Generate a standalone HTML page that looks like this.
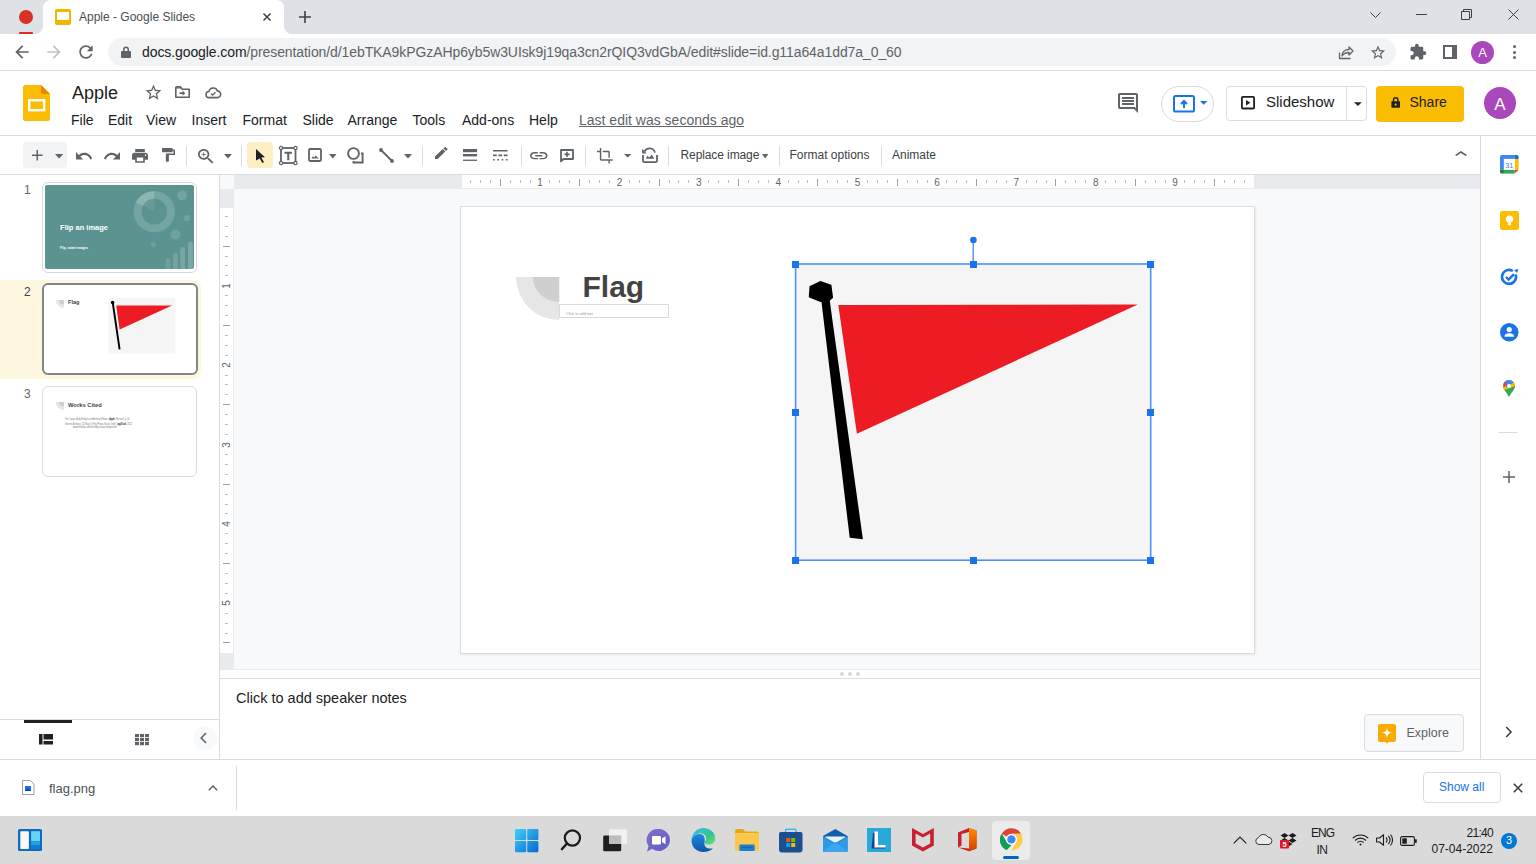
<!DOCTYPE html>
<html><head><meta charset="utf-8">
<style>
*{margin:0;padding:0;box-sizing:border-box}
html,body{width:1536px;height:864px;overflow:hidden;background:#fff;font-family:"Liberation Sans",sans-serif;color:#202124}
.a{position:absolute}
.t{position:absolute;white-space:nowrap;line-height:1}
svg{position:absolute;overflow:visible}
</style></head><body>

<!-- Chrome tab strip -->
<div class="a" style="left:0;top:0;width:1536px;height:34px;background:#dee1e6"></div>
<div class="a" style="left:35px;top:26px;width:8px;height:8px;background:#fff"></div>
<div class="a" style="left:27px;top:18px;width:16px;height:16px;background:#dee1e6;border-radius:0 0 8px 0"></div>
<div class="a" style="left:284px;top:26px;width:8px;height:8px;background:#fff"></div>
<div class="a" style="left:284px;top:18px;width:16px;height:16px;background:#dee1e6;border-radius:0 0 0 8px"></div>
<div class="a" style="left:43px;top:0;width:241px;height:34px;background:#fff;border-radius:8px 8px 0 0"></div>
<div class="a" style="left:19px;top:10px;width:14px;height:14px;border-radius:50%;background:#d93025"></div>
<div class="a" style="left:19px;top:32px;width:14px;height:2px;border-radius:1px 1px 0 0;background:#d93025"></div>
<div class="a" style="left:55px;top:9px;width:16px;height:16px;border-radius:2px;background:#f4b400"></div>
<div class="a" style="left:57px;top:12px;width:12px;height:8px;background:#fff"></div>
<div class="t" style="left:79px;top:11px;font-size:12px;color:#4a4e52">Apple - Google Slides</div>
<svg style="left:263px;top:13px" width="8" height="8" viewBox="0 0 8 8"><path d="M0.5 0.5L7.5 7.5M7.5 0.5L0.5 7.5" stroke="#3c4043" stroke-width="1.5"/></svg>
<svg style="left:299px;top:11px" width="12" height="12" viewBox="0 0 12 12"><path d="M6 0V12M0 6H12" stroke="#3c4043" stroke-width="1.6"/></svg>
<svg style="left:1370px;top:12px" width="11" height="6" viewBox="0 0 11 6"><path d="M0.5 0.5L5.5 5.5L10.5 0.5" stroke="#3c4043" stroke-width="1" fill="none"/></svg>
<div class="a" style="left:1416px;top:14px;width:11px;height:1px;background:#3c4043"></div>
<svg style="left:1461px;top:9px" width="11" height="11" viewBox="0 0 11 11"><path d="M0.5 2.5h8v8h-8z M2.5 2.5V0.5h8v8h-2" stroke="#3c4043" stroke-width="1" fill="none"/></svg>
<svg style="left:1508px;top:9px" width="11" height="11" viewBox="0 0 11 11"><path d="M0.5 0.5L10.5 10.5M10.5 0.5L0.5 10.5" stroke="#3c4043" stroke-width="1" fill="none"/></svg>

<!-- Chrome toolbar -->
<div class="a" style="left:0;top:34px;width:1536px;height:36px;background:#fff"></div>
<div class="a" style="left:0;top:70px;width:1536px;height:1px;background:#dadce0"></div>
<div class="a" style="left:108px;top:38px;width:1288px;height:28px;background:#f1f3f4;border-radius:14px"></div>
<svg style="left:12px;top:42px" width="20" height="20" viewBox="0 0 24 24"><path fill="#5f6368" d="M20 11H7.83l5.59-5.59L12 4l-8 8 8 8 1.41-1.41L7.83 13H20v-2z"/></svg>
<svg style="left:44px;top:42px" width="20" height="20" viewBox="0 0 24 24"><path fill="#bdc1c6" d="M12 4l-1.41 1.41L16.17 11H4v2h12.17l-5.58 5.59L12 20l8-8z"/></svg>
<svg style="left:76px;top:42px" width="20" height="20" viewBox="0 0 24 24"><path fill="#5f6368" d="M17.65 6.35C16.2 4.9 14.21 4 12 4c-4.42 0-7.99 3.58-7.99 8s3.57 8 7.99 8c3.73 0 6.84-2.55 7.73-6h-2.08c-.82 2.33-3.04 4-5.65 4-3.31 0-6-2.69-6-6s2.69-6 6-6c1.66 0 3.14.69 4.22 1.78L13 11h7V4l-2.35 2.35z"/></svg>
<svg style="left:121px;top:46px" width="10" height="12" viewBox="0 0 10 12"><path fill="#5f6368" d="M2 5V3.5a3 3 0 0 1 6 0V5h1a1 1 0 0 1 1 1v5a1 1 0 0 1-1 1H1a1 1 0 0 1-1-1V6a1 1 0 0 1 1-1zM3.5 5h3V3.5a1.5 1.5 0 0 0-3 0z"/></svg>
<div class="t" style="left:142px;top:45px;font-size:14px;letter-spacing:-0.09px;color:#5f6368"><span style="color:#202124">docs.google.com</span>/presentation/d/1ebTKA9kPGzAHp6yb5w3UIsk9j19qa3cn2rQIQ3vdGbA/edit#slide=id.g11a64a1dd7a_0_60</div>
<svg style="left:1338px;top:44px" width="16" height="16" viewBox="0 0 16 16"><path d="M1.5 8.5v6h11M4 12c0-4 3-6.5 7-6.5V3l4 4-4 4V8.5c-3 0-5.5 1-7 3.5z" stroke="#5f6368" stroke-width="1.3" fill="none" stroke-linejoin="round"/></svg>
<svg style="left:1369px;top:44px" width="18" height="17" viewBox="0 0 24 24"><path fill="#5f6368" d="M22 9.24l-7.19-.62L12 2 9.19 8.63 2 9.24l5.46 4.73L5.82 21 12 17.27 18.18 21l-1.63-7.03L22 9.24zM12 15.4l-3.76 2.27 1-4.28-3.32-2.88 4.38-.38L12 6.1l1.71 4.04 4.38.38-3.32 2.88 1 4.28L12 15.4z"/></svg>
<svg style="left:1409px;top:43px" width="18" height="18" viewBox="0 0 24 24"><path fill="#5f6368" d="M20.5 11H19V7c0-1.1-.9-2-2-2h-4V3.5C13 2.12 11.88 1 10.5 1S8 2.12 8 3.5V5H4c-1.1 0-1.99.9-1.99 2v3.8H3.5c1.49 0 2.7 1.21 2.7 2.7s-1.21 2.7-2.7 2.7H2V20c0 1.1.9 2 2 2h3.8v-1.5c0-1.49 1.21-2.7 2.7-2.7 1.49 0 2.7 1.21 2.7 2.7V22H17c1.1 0 2-.9 2-2v-4h1.5c1.38 0 2.5-1.12 2.5-2.5S21.88 11 20.5 11z"/></svg>
<svg style="left:1443px;top:45px" width="14" height="14" viewBox="0 0 14 14"><path d="M1 1h12v12H1z" stroke="#5f6368" stroke-width="2" fill="none"/><path d="M9 1h4v12H9z" fill="#5f6368"/></svg>
<div class="a" style="left:1471px;top:41px;width:23px;height:23px;border-radius:50%;background:#ab47bc"></div>
<div class="t" style="left:1471px;top:46px;width:23px;text-align:center;font-size:13px;color:#fff">A</div>
<div class="a" style="left:1512.5px;top:45px;width:3px;height:3px;border-radius:50%;background:#5f6368"></div>
<div class="a" style="left:1512.5px;top:50.5px;width:3px;height:3px;border-radius:50%;background:#5f6368"></div>
<div class="a" style="left:1512.5px;top:56px;width:3px;height:3px;border-radius:50%;background:#5f6368"></div>

<!-- Slides header -->
<svg style="left:23px;top:85px" width="27" height="36" viewBox="0 0 27 36"><path d="M2.5 0H18L27 9V33.5A2.5 2.5 0 0 1 24.5 36H2.5A2.5 2.5 0 0 1 0 33.5V2.5A2.5 2.5 0 0 1 2.5 0z" fill="#fbbc04"/><path d="M18 0L27 9H20A2 2 0 0 1 18 7z" fill="#ea8600"/><rect x="6.2" y="15.2" width="15" height="10" fill="none" stroke="#fff" stroke-width="2.4"/></svg>
<div class="t" style="left:72px;top:84px;font-size:18px;color:#202124">Apple</div>
<svg style="left:143.5px;top:82.6px" width="19" height="19" viewBox="0 0 24 24"><path fill="#5f6368" d="M22 9.24l-7.19-.62L12 2 9.19 8.63 2 9.24l5.46 4.73L5.82 21 12 17.27 18.18 21l-1.63-7.03L22 9.24zM12 15.4l-3.76 2.27 1-4.28-3.32-2.88 4.38-.38L12 6.1l1.71 4.04 4.38.38-3.32 2.88 1 4.28L12 15.4z"/></svg>
<svg style="left:175px;top:86px" width="15" height="12" viewBox="0 0 15 12"><path d="M0.8 1.8V11.2H14.2V3.2H7L5.6 0.8H1.8A1 1 0 0 0 0.8 1.8z" stroke="#5f6368" stroke-width="1.6" fill="none" stroke-linejoin="round"/><path d="M0.8 1.2H5.6L6.8 2.4H0.8z" fill="#5f6368"/><path d="M4.5 7.2h3.6" stroke="#5f6368" stroke-width="1.8"/><path d="M7.6 4.6L10.2 7.2 7.6 9.8z" fill="#5f6368"/></svg>
<svg style="left:204.8px;top:86.8px" width="16.5" height="11.5" viewBox="0 0 18 13"><path d="M4.5 12a3.5 3.5 0 0 1-.4-7A5 5 0 0 1 13.7 4.4 3.8 3.8 0 0 1 13.5 12z" stroke="#5f6368" stroke-width="1.8" fill="none"/><path d="M6.5 7.6l1.8 1.6 3.2-3.2" stroke="#5f6368" stroke-width="1.6" fill="none"/></svg>
<div class="t" style="left:71px;top:113px;font-size:14px;color:#202124">File</div>
<div class="t" style="left:108px;top:113px;font-size:14px;color:#202124">Edit</div>
<div class="t" style="left:146px;top:113px;font-size:14px;color:#202124">View</div>
<div class="t" style="left:191.5px;top:113px;font-size:14px;color:#202124">Insert</div>
<div class="t" style="left:242.5px;top:113px;font-size:14px;color:#202124">Format</div>
<div class="t" style="left:302.5px;top:113px;font-size:14px;color:#202124">Slide</div>
<div class="t" style="left:347.5px;top:113px;font-size:14px;color:#202124">Arrange</div>
<div class="t" style="left:412.5px;top:113px;font-size:14px;color:#202124">Tools</div>
<div class="t" style="left:462px;top:113px;font-size:14px;color:#202124">Add-ons</div>
<div class="t" style="left:529px;top:113px;font-size:14px;color:#202124">Help</div>
<div class="t" style="left:579px;top:113px;font-size:14px;color:#5f6368;text-decoration:underline;text-underline-offset:1px">Last edit was seconds ago</div>

<svg style="left:1116px;top:91px" width="24" height="24" viewBox="0 0 24 24"><path fill="#5f6368" d="M21.99 4c0-1.1-.89-2-1.99-2H4c-1.1 0-2 .9-2 2v12c0 1.1.9 2 2 2h14l4 4-.01-18zM20 4v13.17L18.83 16H4V4h16zM6 12h12v2H6zm0-3h12v2H6zm0-3h12v2H6z"/></svg>
<div class="a" style="left:1161px;top:85.5px;width:53px;height:36px;border-radius:18px;border:1px solid #dadada;background:#fff"></div>
<svg style="left:1172.5px;top:94.6px" width="22" height="17.6" viewBox="0 0 22 17.6"><rect x="1" y="1" width="20" height="15.6" rx="1.6" stroke="#1a73e8" stroke-width="2" fill="none"/><path d="M11 13V5.8M8 9L11 6l3 3" stroke="#1a73e8" stroke-width="2" fill="none"/></svg>
<svg style="left:1199.6px;top:101.4px" width="7.4" height="3.9" viewBox="0 0 10 5"><path d="M0 0h10L5 5z" fill="#1a73e8"/></svg>
<div class="a" style="left:1226px;top:85.7px;width:141.4px;height:35.8px;border-radius:4px;border:1px solid #dadce0;background:#fff"></div>
<div class="a" style="left:1346px;top:86px;width:1px;height:35.2px;background:#dadce0"></div>
<svg style="left:1241px;top:96.2px" width="14" height="13.4" viewBox="0 0 14 13.4"><rect x="0.9" y="0.9" width="12.2" height="11.6" rx="1" stroke="#202124" stroke-width="1.8" fill="none"/><path d="M5 4v5.4l4.4-2.7z" fill="#202124"/></svg>
<div class="t" style="left:1266px;top:94px;font-size:15px;color:#202124">Slideshow</div>
<svg style="left:1353.7px;top:101.5px" width="7.8" height="4.2" viewBox="0 0 10 5"><path d="M0 0h10L5 5z" fill="#202124"/></svg>
<div class="a" style="left:1376px;top:85.6px;width:88px;height:36px;border-radius:4px;background:#fbbc04"></div>
<svg style="left:1390.5px;top:97.2px" width="9.4" height="10.8" viewBox="0 0 12 15"><path fill="#202124" d="M2 6V4a4 4 0 0 1 8 0v2h1a1 1 0 0 1 1 1v7a1 1 0 0 1-1 1H1a1 1 0 0 1-1-1V7a1 1 0 0 1 1-1zM4 6h4V4a2 2 0 0 0-4 0z"/><circle cx="6" cy="10.5" r="1.5" fill="#fbbc04"/></svg>
<div class="t" style="left:1409.5px;top:94.8px;font-size:14px;color:#202124">Share</div>
<div class="a" style="left:1484px;top:86.8px;width:32px;height:32px;border-radius:50%;background:#ab47bc"></div>
<div class="t" style="left:1484px;top:95.6px;width:32px;text-align:center;font-size:17px;color:#fff">A</div>
<div class="a" style="left:0;top:135px;width:1536px;height:1px;background:#dadce0"></div>
<div class="a" style="left:0;top:174px;width:1480px;height:1px;background:#dadce0"></div>

<!-- TOOLBAR -->
<div class="a" style="left:23px;top:142px;width:44px;height:25.5px;border-radius:4px;background:#f1f3f4"></div>
<svg style="left:32px;top:150.3px" width="10.50" height="10.50" viewBox="5 5 14 14" preserveAspectRatio="none"><path fill="#5f6368" d="M19 13h-6v6h-2v-6H5v-2h6V5h2v6h6v2z" /></svg>
<svg style="left:55.2px;top:153.7px" width="8.20" height="4.50" viewBox="7 10 10 5" preserveAspectRatio="none"><path fill="#5f6368" d="M7 10l5 5 5-5z" /></svg>
<svg style="left:75.7px;top:151.5px" width="16.20" height="7.50" viewBox="2 7 20.47 9" preserveAspectRatio="none"><path fill="#5f6368" d="M12.5 8c-2.65 0-5.05.99-6.9 2.6L2 7v9h9l-3.62-3.62c1.39-1.16 3.16-1.88 5.12-1.88 3.54 0 6.55 2.31 7.6 5.5l2.37-.78C21.08 11.03 17.15 8 12.5 8z" /></svg>
<svg style="left:104px;top:151.5px" width="16.00" height="7.50" viewBox="1.54 7 20.46 9" preserveAspectRatio="none"><path fill="#5f6368" d="M18.4 10.6C16.55 8.99 14.15 8 11.5 8c-4.65 0-8.58 3.03-9.96 7.22L3.9 16c1.05-3.19 4.05-5.5 7.6-5.5 1.95 0 3.73.72 5.12 1.88L13 16h9V7l-3.6 3.6z" /></svg>
<svg style="left:132px;top:148.5px" width="16.00" height="13.80" viewBox="2 3 20 18" preserveAspectRatio="none"><path fill="#5f6368" d="M19 8H5c-1.66 0-3 1.34-3 3v6h4v4h12v-4h4v-6c0-1.66-1.34-3-3-3zm-3 11H8v-5h8v5zm3-7c-.55 0-1-.45-1-1s.45-1 1-1 1 .45 1 1-.45 1-1 1zm-1-9H6v4h12V3z" /></svg>
<svg style="left:162px;top:148.2px" width="13.00" height="13.80" viewBox="4 2 17 20" preserveAspectRatio="none"><path fill="#5f6368" d="M18 4V3c0-.55-.45-1-1-1H5c-.55 0-1 .45-1 1v4c0 .55.45 1 1 1h12c.55 0 1-.45 1-1V6h1v4H9v11c0 .55.45 1 1 1h2c.55 0 1-.45 1-1v-9h8V4h-3z" /></svg>
<div class="a" style="left:186px;top:145.5px;width:1px;height:20px;background:#dadce0"></div>
<svg style="left:198.2px;top:148.8px" width="15.30" height="14.40" viewBox="3 3 17.49 17.49" preserveAspectRatio="none"><path fill="#5f6368" d="M15.5 14h-.79l-.28-.27C15.41 12.59 16 11.11 16 9.5 16 5.91 13.09 3 9.5 3S3 5.91 3 9.5 5.91 16 9.5 16c1.61 0 3.09-.59 4.23-1.57l.27.28v.79l5 4.99L20.49 19l-4.99-5zm-6 0C7.01 14 5 11.99 5 9.5S7.01 5 9.5 5 14 7.01 14 9.5 11.99 14 9.5 14zm2.5-4h-2v2H9v-2H7V9h2V7h1v2h2v1z" /></svg>
<svg style="left:224.4px;top:153.7px" width="7.90" height="4.50" viewBox="7 10 10 5" preserveAspectRatio="none"><path fill="#5f6368" d="M7 10l5 5 5-5z" /></svg>
<div class="a" style="left:241px;top:145.5px;width:1px;height:20px;background:#dadce0"></div>
<div class="a" style="left:247px;top:142px;width:26px;height:25.5px;border-radius:4px;background:#feefc3"></div>
<svg style="left:255.8px;top:148.5px" width="9.00" height="14.10" viewBox="0 0 9 14.1" preserveAspectRatio="none"><path fill="#202124" d="M0 0L9 8.3 5.4 8.6 8 13.2 6.3 14.1 3.7 9.4 0 11.6z" /></svg>
<svg style="left:279px;top:146px" width="18.5" height="19" viewBox="0 0 18.5 19"><rect x="2" y="2" width="14.5" height="15" fill="none" stroke="#5f6368" stroke-width="1.8"/><circle cx="2" cy="2" r="1.6" fill="#fff" stroke="#5f6368" stroke-width="1.2"/><circle cx="16.5" cy="2" r="1.6" fill="#fff" stroke="#5f6368" stroke-width="1.2"/><circle cx="2" cy="17" r="1.6" fill="#fff" stroke="#5f6368" stroke-width="1.2"/><circle cx="16.5" cy="17" r="1.6" fill="#fff" stroke="#5f6368" stroke-width="1.2"/><path d="M5.5 5.8h7.5V7.8h-2.7v6.4H8.2V7.8H5.5z" fill="#5f6368"/></svg>
<svg style="left:308px;top:148px" width="14" height="14" viewBox="0 0 14 14"><rect x="1" y="1" width="12" height="12" rx="1.2" fill="none" stroke="#5f6368" stroke-width="1.8"/><path d="M3.3 10.5l1.8-2.3 1.2 1.4 1.5-2 2.8 2.9z" fill="#5f6368"/></svg>
<svg style="left:328.5px;top:153.8px" width="7.50" height="4.40" viewBox="7 10 10 5" preserveAspectRatio="none"><path fill="#5f6368" d="M7 10l5 5 5-5z" /></svg>
<svg style="left:347px;top:146.5px" width="17" height="16.5" viewBox="0 0 17 16.5"><circle cx="6.5" cy="6.5" r="5.4" fill="none" stroke="#5f6368" stroke-width="1.9"/><path d="M14 6.5h1.6v9H6.5v-1.6" fill="none" stroke="#5f6368" stroke-width="1.9"/></svg>
<svg style="left:378.5px;top:148px" width="15" height="15" viewBox="0 0 15 15"><path d="M2 2L13 13" stroke="#5f6368" stroke-width="1.8"/><circle cx="2" cy="2" r="1.9" fill="#5f6368"/><circle cx="13" cy="13" r="1.9" fill="#5f6368"/></svg>
<svg style="left:404px;top:153.8px" width="8.00" height="4.40" viewBox="7 10 10 5" preserveAspectRatio="none"><path fill="#5f6368" d="M7 10l5 5 5-5z" /></svg>
<div class="a" style="left:421.5px;top:145.5px;width:1px;height:20px;background:#dadce0"></div>
<svg style="left:435px;top:147.3px" width="12.50" height="11.90" viewBox="3 3 18 18" preserveAspectRatio="none"><path fill="#5f6368" d="M3 17.25V21h3.75L17.81 9.94l-3.75-3.75L3 17.25zM20.71 7.04c.39-.39.39-1.02 0-1.41l-2.34-2.34c-.39-.39-1.02-.39-1.41 0l-1.83 1.83 3.75 3.75 1.83-1.83z" /></svg>
<svg style="left:463.2px;top:149px" width="14.1" height="12" viewBox="0 0 14.1 12"><rect x="0" y="0" width="14.1" height="3.2" fill="#5f6368"/><rect x="0" y="5" width="14.1" height="2.4" fill="#5f6368"/><rect x="0" y="10.6" width="14.1" height="1.3" fill="#5f6368"/></svg>
<svg style="left:493.2px;top:150px" width="14.6" height="10.5" viewBox="0 0 14.6 10.5"><rect x="0" y="0" width="14.6" height="1.5" fill="#5f6368"/><rect x="0" y="4.5" width="3.8" height="1.7" fill="#5f6368"/><rect x="5.4" y="4.5" width="3.8" height="1.7" fill="#5f6368"/><rect x="10.8" y="4.5" width="3.8" height="1.7" fill="#5f6368"/><rect x="0" y="9" width="1.7" height="1.5" fill="#5f6368"/><rect x="4.3" y="9" width="1.7" height="1.5" fill="#5f6368"/><rect x="8.6" y="9" width="1.7" height="1.5" fill="#5f6368"/><rect x="12.9" y="9" width="1.7" height="1.5" fill="#5f6368"/></svg>
<div class="a" style="left:520.5px;top:145.5px;width:1px;height:20px;background:#dadce0"></div>
<svg style="left:530.4px;top:151.9px" width="17.50" height="7.30" viewBox="2 7 20 10" preserveAspectRatio="none"><path fill="#5f6368" d="M3.9 12c0-1.71 1.39-3.1 3.1-3.1h4V7H7c-2.76 0-5 2.24-5 5s2.24 5 5 5h4v-1.9H7c-1.71 0-3.1-1.39-3.1-3.1zM8 13h8v-2H8v2zm9-6h-4v1.9h4c1.71 0 3.1 1.39 3.1 3.1s-1.39 3.1-3.1 3.1h-4V17h4c2.76 0 5-2.24 5-5s-2.24-5-5-5z" /></svg>
<svg style="left:560px;top:149px" width="14" height="13" viewBox="0 0 14 13"><path d="M1 10.2V1h12v9H3.6L1 12.4z" fill="none" stroke="#5f6368" stroke-width="1.8" stroke-linejoin="round"/><path d="M7 2.8v5.2M4.4 5.4h5.2" stroke="#5f6368" stroke-width="1.6"/></svg>
<div class="a" style="left:585px;top:145.5px;width:1px;height:20px;background:#dadce0"></div>
<svg style="left:597px;top:148.2px" width="15.70" height="15.50" viewBox="1 1 22 22" preserveAspectRatio="none"><path fill="#5f6368" d="M17 15h2V7c0-1.1-.9-2-2-2H9v2h8v8zM7 17V1H5v4H1v2h4v10c0 1.1.9 2 2 2h10v4h2v-4h4v-2H7z" /></svg>
<svg style="left:624px;top:154px" width="7.30" height="3.50" viewBox="7 10 10 5" preserveAspectRatio="none"><path fill="#5f6368" d="M7 10l5 5 5-5z" /></svg>
<svg style="left:638px;top:144px" width="24" height="22" viewBox="0 0 24 22"><path d="M5 11V16.7A1.5 1.5 0 0 0 6.5 18.2H17.5A1.5 1.5 0 0 0 19 16.7V11" fill="none" stroke="#5f6368" stroke-width="1.8"/><path d="M6.5 7.6A5.6 5.6 0 0 1 17 8.6" fill="none" stroke="#5f6368" stroke-width="1.7"/><path d="M4.1 4.8V9.4H8.6z" fill="#5f6368"/><path d="M7.6 14.8L9.6 11.8 11.2 13.6 13.8 10.6 16.4 14.8z" fill="#5f6368"/></svg>
<div class="a" style="left:668px;top:145.5px;width:1px;height:20px;background:#dadce0"></div>
<div class="t" style="left:680.5px;top:149px;font-size:12px;letter-spacing:-0.1px;color:#3c4043">Replace image</div>
<svg style="left:762px;top:153.7px" width="6.40" height="4.50" viewBox="7 10 10 5" preserveAspectRatio="none"><path fill="#5f6368" d="M7 10l5 5 5-5z" /></svg>
<div class="a" style="left:778.5px;top:145.5px;width:1px;height:20px;background:#dadce0"></div>
<div class="t" style="left:789.5px;top:149px;font-size:12px;color:#3c4043">Format options</div>
<div class="a" style="left:881px;top:145.5px;width:1px;height:20px;background:#dadce0"></div>
<div class="t" style="left:892px;top:149px;font-size:12px;color:#3c4043">Animate</div>
<svg style="left:1455px;top:150.5px" width="12.00" height="5.00" viewBox="6 8 12 7.41" preserveAspectRatio="none"><path fill="#5f6368" d="M12 8l-6 6 1.41 1.41L12 10.83l4.59 4.58L18 14z" /></svg>
<!-- /TOOLBAR -->
<!-- FILM -->
<div class="a" style="left:219px;top:175px;width:1px;height:585px;background:#dadce0"></div>
<div class="a" style="left:0;top:279.5px;width:201px;height:99px;background:#fef7e0;border-radius:0 8px 8px 0"></div>
<div class="a" style="left:0;top:719px;width:219px;height:1px;background:#dadce0"></div>
<div class="t" style="left:24px;top:184px;font-size:12px;color:#5f6368">1</div>
<div class="t" style="left:24px;top:286px;font-size:12px;color:#3c4043">2</div>
<div class="t" style="left:24px;top:388px;font-size:12px;color:#5f6368">3</div>
<div class="a" style="left:42px;top:182px;width:154.5px;height:90.5px;border:1.6px solid #d5d7da;border-radius:6px;background:#fff"></div>
<svg style="left:45px;top:185px" width="149" height="84" viewBox="0 0 149 84"><defs><clipPath id="c1"><rect width="149" height="84" rx="2"/></clipPath></defs><g clip-path="url(#c1)"><rect width="149" height="84" fill="#5a938f"/>
<circle cx="109.3" cy="26.6" r="16.75" fill="none" stroke="#fff" stroke-opacity=".17" stroke-width="7.9"/>
<path d="M109.3 5.9A20.7 20.7 0 0 0 90.8 17.3L97.9 20.8A12.8 12.8 0 0 1 109.3 13.8z" fill="#fff" fill-opacity=".17"/>
<path d="M109.3 26.6V13.8A12.8 12.8 0 0 0 97.9 20.8z" fill="#fff" fill-opacity=".08"/>
<circle cx="137" cy="10.2" r="5" fill="#fff" fill-opacity=".15"/>
<circle cx="141.9" cy="33.1" r="3.2" fill="#fff" fill-opacity=".13"/>
<circle cx="130.5" cy="49.4" r="5" fill="#fff" fill-opacity=".13"/>
<circle cx="108.5" cy="59.4" r="2.5" fill="#fff" fill-opacity=".13"/>
<rect x="120.5" y="73.3" width="4.9" height="14" rx="2.4" fill="#fff" fill-opacity=".12"/>
<rect x="128" y="67.4" width="4.9" height="20" rx="2.4" fill="#fff" fill-opacity=".15"/>
<rect x="135.3" y="61.9" width="4.9" height="25" rx="2.4" fill="#fff" fill-opacity=".18"/>
<rect x="143" y="56.5" width="4.9" height="30" rx="2.4" fill="#fff" fill-opacity=".2"/>
<text x="15.1" y="45" font-family="Liberation Sans" font-weight="bold" font-size="8" fill="#fff" textLength="47.9" lengthAdjust="spacingAndGlyphs">Flip an image</text>
<text x="15.1" y="63.6" font-family="Liberation Sans" font-weight="bold" font-size="3.4" fill="#fff" textLength="27.8" lengthAdjust="spacingAndGlyphs">Flip, rotate images</text></g></svg>
<div class="a" style="left:41.5px;top:283px;width:156px;height:92px;border:2px solid #80868b;border-radius:6px;background:#fff"></div>
<svg style="left:44px;top:286px" width="151" height="86" viewBox="0 0 151 86">
<path d="M11.8 14H19.8V22A8 8 0 0 1 11.8 14z" fill="#e6e6e6"/><path d="M15 14H19.8V18.6A4.8 4.6 0 0 1 15 14z" fill="#cfcfcf"/>
<text x="24" y="18.3" font-family="Liberation Sans" font-weight="bold" font-size="5.6" fill="#434343">Flag</text>
<rect x="64.3" y="12.1" width="67" height="55.4" fill="#f5f5f5"/>
<path d="M72.2 19.4L128.1 19.4 75.6 43.4z" fill="#ed1c24"/>
<path d="M68.8 17L75.6 63.4" stroke="#000" stroke-width="1.9"/><circle cx="68.6" cy="16.6" r="1.8" fill="#000"/>
</svg>
<div class="a" style="left:42px;top:386px;width:155px;height:90.5px;border:1.5px solid #dadce0;border-radius:6px;background:#fff"></div>
<svg style="left:45px;top:389px" width="149" height="84" viewBox="0 0 149 84">
<path d="M10.8 13H18.8V21A8 8 0 0 1 10.8 13z" fill="#e6e6e6"/><path d="M14 13H18.8V17.6A4.8 4.6 0 0 1 14 13z" fill="#cfcfcf"/>
<text x="23" y="18" font-family="Liberation Sans" font-weight="bold" font-size="5.8" fill="#434343">Works Cited</text>
<text x="20" y="31.2" font-family="Liberation Sans" font-size="2.8" fill="#777" textLength="65" lengthAdjust="spacingAndGlyphs">Fun Comps. Andy Rodgers and Anthony Williams. <tspan font-weight="bold" fill="#222">Apple</tspan>. Microsoft, p. 54.</text>
<text x="20" y="36" font-family="Liberation Sans" font-size="2.8" fill="#777" textLength="67.7" lengthAdjust="spacingAndGlyphs">Greene, Anthony. "10 Ways To Flip Photos Easily Online" <tspan font-weight="bold" fill="#222">appTools</tspan>, 2022.</text>
<text x="27.8" y="39.2" font-family="Liberation Sans" font-size="2.8" fill="#777" textLength="44" lengthAdjust="spacingAndGlyphs">www.freeflip.com/tools/flip-rotate-image.html</text>
</svg>
<div class="a" style="left:24px;top:720px;width:48px;height:2.5px;background:#202124"></div>
<svg style="left:39px;top:734px" width="14" height="10.5" viewBox="0 0 14 10.5"><rect x="0" y="0" width="3.5" height="10.5" fill="#202124"/><rect x="4.5" y="0" width="9.5" height="5.5" fill="#202124"/><rect x="4.5" y="7" width="9.5" height="3.5" fill="#202124"/></svg>
<svg style="left:135px;top:734px" width="14" height="11" viewBox="0 0 14 11"><rect x="0" y="0" width="4" height="3.2" fill="#5f6368"/><rect x="5" y="0" width="4" height="3.2" fill="#5f6368"/><rect x="10" y="0" width="4" height="3.2" fill="#5f6368"/><rect x="0" y="4" width="4" height="3.2" fill="#5f6368"/><rect x="5" y="4" width="4" height="3.2" fill="#5f6368"/><rect x="10" y="4" width="4" height="3.2" fill="#5f6368"/><rect x="0" y="8" width="4" height="3.2" fill="#5f6368"/><rect x="5" y="8" width="4" height="3.2" fill="#5f6368"/><rect x="10" y="8" width="4" height="3.2" fill="#5f6368"/></svg>
<div class="a" style="left:193px;top:726px;width:24px;height:24px;border-radius:50%;background:#f8f9fa"></div>
<svg style="left:200px;top:732px" width="7" height="12" viewBox="0 0 7 12"><path d="M6 1L1.2 6 6 11" stroke="#5f6368" stroke-width="1.6" fill="none"/></svg>
<!-- /FILM -->
<!-- CANVAS -->
<div class="a" style="left:220px;top:175px;width:1260px;height:495px;background:#f8f9fa"></div>
<div class="a" style="left:234px;top:175px;width:1246px;height:14px;background:#e8eaed"></div>
<div class="a" style="left:462px;top:175px;width:791.5px;height:13px;background:#fff"></div>
<div class="a" style="left:220px;top:175px;width:13.5px;height:495px;background:#e8eaed"></div>
<div class="a" style="left:220px;top:175px;width:13.5px;height:14px;background:#f8f9fa"></div>
<div class="a" style="left:220px;top:208px;width:13px;height:445px;background:#fff"></div>
<div class="a" style="left:470.12px;top:180px;width:1px;height:3px;background:#bdc1c6"></div>
<div class="a" style="left:480.04px;top:180px;width:1px;height:3px;background:#bdc1c6"></div>
<div class="a" style="left:489.96px;top:180px;width:1px;height:3px;background:#bdc1c6"></div>
<div class="a" style="left:499.88px;top:178.5px;width:1px;height:7px;background:#9aa0a6"></div>
<div class="a" style="left:509.81px;top:180px;width:1px;height:3px;background:#bdc1c6"></div>
<div class="a" style="left:519.73px;top:180px;width:1px;height:3px;background:#bdc1c6"></div>
<div class="a" style="left:529.65px;top:180px;width:1px;height:3px;background:#bdc1c6"></div>
<div class="t" style="left:530.07px;top:177.5px;width:20px;text-align:center;font-size:10px;color:#5f6368">1</div>
<div class="a" style="left:549.49px;top:180px;width:1px;height:3px;background:#bdc1c6"></div>
<div class="a" style="left:559.41px;top:180px;width:1px;height:3px;background:#bdc1c6"></div>
<div class="a" style="left:569.33px;top:180px;width:1px;height:3px;background:#bdc1c6"></div>
<div class="a" style="left:579.25px;top:178.5px;width:1px;height:7px;background:#9aa0a6"></div>
<div class="a" style="left:589.18px;top:180px;width:1px;height:3px;background:#bdc1c6"></div>
<div class="a" style="left:599.10px;top:180px;width:1px;height:3px;background:#bdc1c6"></div>
<div class="a" style="left:609.02px;top:180px;width:1px;height:3px;background:#bdc1c6"></div>
<div class="t" style="left:609.44px;top:177.5px;width:20px;text-align:center;font-size:10px;color:#5f6368">2</div>
<div class="a" style="left:628.86px;top:180px;width:1px;height:3px;background:#bdc1c6"></div>
<div class="a" style="left:638.78px;top:180px;width:1px;height:3px;background:#bdc1c6"></div>
<div class="a" style="left:648.70px;top:180px;width:1px;height:3px;background:#bdc1c6"></div>
<div class="a" style="left:658.62px;top:178.5px;width:1px;height:7px;background:#9aa0a6"></div>
<div class="a" style="left:668.55px;top:180px;width:1px;height:3px;background:#bdc1c6"></div>
<div class="a" style="left:678.47px;top:180px;width:1px;height:3px;background:#bdc1c6"></div>
<div class="a" style="left:688.39px;top:180px;width:1px;height:3px;background:#bdc1c6"></div>
<div class="t" style="left:688.81px;top:177.5px;width:20px;text-align:center;font-size:10px;color:#5f6368">3</div>
<div class="a" style="left:708.23px;top:180px;width:1px;height:3px;background:#bdc1c6"></div>
<div class="a" style="left:718.15px;top:180px;width:1px;height:3px;background:#bdc1c6"></div>
<div class="a" style="left:728.07px;top:180px;width:1px;height:3px;background:#bdc1c6"></div>
<div class="a" style="left:738.00px;top:178.5px;width:1px;height:7px;background:#9aa0a6"></div>
<div class="a" style="left:747.92px;top:180px;width:1px;height:3px;background:#bdc1c6"></div>
<div class="a" style="left:757.84px;top:180px;width:1px;height:3px;background:#bdc1c6"></div>
<div class="a" style="left:767.76px;top:180px;width:1px;height:3px;background:#bdc1c6"></div>
<div class="t" style="left:768.18px;top:177.5px;width:20px;text-align:center;font-size:10px;color:#5f6368">4</div>
<div class="a" style="left:787.60px;top:180px;width:1px;height:3px;background:#bdc1c6"></div>
<div class="a" style="left:797.52px;top:180px;width:1px;height:3px;background:#bdc1c6"></div>
<div class="a" style="left:807.44px;top:180px;width:1px;height:3px;background:#bdc1c6"></div>
<div class="a" style="left:817.37px;top:178.5px;width:1px;height:7px;background:#9aa0a6"></div>
<div class="a" style="left:827.29px;top:180px;width:1px;height:3px;background:#bdc1c6"></div>
<div class="a" style="left:837.21px;top:180px;width:1px;height:3px;background:#bdc1c6"></div>
<div class="a" style="left:847.13px;top:180px;width:1px;height:3px;background:#bdc1c6"></div>
<div class="t" style="left:847.55px;top:177.5px;width:20px;text-align:center;font-size:10px;color:#5f6368">5</div>
<div class="a" style="left:866.97px;top:180px;width:1px;height:3px;background:#bdc1c6"></div>
<div class="a" style="left:876.89px;top:180px;width:1px;height:3px;background:#bdc1c6"></div>
<div class="a" style="left:886.81px;top:180px;width:1px;height:3px;background:#bdc1c6"></div>
<div class="a" style="left:896.74px;top:178.5px;width:1px;height:7px;background:#9aa0a6"></div>
<div class="a" style="left:906.66px;top:180px;width:1px;height:3px;background:#bdc1c6"></div>
<div class="a" style="left:916.58px;top:180px;width:1px;height:3px;background:#bdc1c6"></div>
<div class="a" style="left:926.50px;top:180px;width:1px;height:3px;background:#bdc1c6"></div>
<div class="t" style="left:926.92px;top:177.5px;width:20px;text-align:center;font-size:10px;color:#5f6368">6</div>
<div class="a" style="left:946.34px;top:180px;width:1px;height:3px;background:#bdc1c6"></div>
<div class="a" style="left:956.26px;top:180px;width:1px;height:3px;background:#bdc1c6"></div>
<div class="a" style="left:966.18px;top:180px;width:1px;height:3px;background:#bdc1c6"></div>
<div class="a" style="left:976.11px;top:178.5px;width:1px;height:7px;background:#9aa0a6"></div>
<div class="a" style="left:986.03px;top:180px;width:1px;height:3px;background:#bdc1c6"></div>
<div class="a" style="left:995.95px;top:180px;width:1px;height:3px;background:#bdc1c6"></div>
<div class="a" style="left:1005.87px;top:180px;width:1px;height:3px;background:#bdc1c6"></div>
<div class="t" style="left:1006.29px;top:177.5px;width:20px;text-align:center;font-size:10px;color:#5f6368">7</div>
<div class="a" style="left:1025.71px;top:180px;width:1px;height:3px;background:#bdc1c6"></div>
<div class="a" style="left:1035.63px;top:180px;width:1px;height:3px;background:#bdc1c6"></div>
<div class="a" style="left:1045.55px;top:180px;width:1px;height:3px;background:#bdc1c6"></div>
<div class="a" style="left:1055.48px;top:178.5px;width:1px;height:7px;background:#9aa0a6"></div>
<div class="a" style="left:1065.40px;top:180px;width:1px;height:3px;background:#bdc1c6"></div>
<div class="a" style="left:1075.32px;top:180px;width:1px;height:3px;background:#bdc1c6"></div>
<div class="a" style="left:1085.24px;top:180px;width:1px;height:3px;background:#bdc1c6"></div>
<div class="t" style="left:1085.66px;top:177.5px;width:20px;text-align:center;font-size:10px;color:#5f6368">8</div>
<div class="a" style="left:1105.08px;top:180px;width:1px;height:3px;background:#bdc1c6"></div>
<div class="a" style="left:1115.00px;top:180px;width:1px;height:3px;background:#bdc1c6"></div>
<div class="a" style="left:1124.92px;top:180px;width:1px;height:3px;background:#bdc1c6"></div>
<div class="a" style="left:1134.85px;top:178.5px;width:1px;height:7px;background:#9aa0a6"></div>
<div class="a" style="left:1144.77px;top:180px;width:1px;height:3px;background:#bdc1c6"></div>
<div class="a" style="left:1154.69px;top:180px;width:1px;height:3px;background:#bdc1c6"></div>
<div class="a" style="left:1164.61px;top:180px;width:1px;height:3px;background:#bdc1c6"></div>
<div class="t" style="left:1165.03px;top:177.5px;width:20px;text-align:center;font-size:10px;color:#5f6368">9</div>
<div class="a" style="left:1184.45px;top:180px;width:1px;height:3px;background:#bdc1c6"></div>
<div class="a" style="left:1194.37px;top:180px;width:1px;height:3px;background:#bdc1c6"></div>
<div class="a" style="left:1204.29px;top:180px;width:1px;height:3px;background:#bdc1c6"></div>
<div class="a" style="left:1214.22px;top:178.5px;width:1px;height:7px;background:#9aa0a6"></div>
<div class="a" style="left:1224.14px;top:180px;width:1px;height:3px;background:#bdc1c6"></div>
<div class="a" style="left:1234.06px;top:180px;width:1px;height:3px;background:#bdc1c6"></div>
<div class="a" style="left:1243.98px;top:180px;width:1px;height:3px;background:#bdc1c6"></div>
<div class="a" style="left:225px;top:215.82px;width:3px;height:1px;background:#bdc1c6"></div>
<div class="a" style="left:225px;top:225.74px;width:3px;height:1px;background:#bdc1c6"></div>
<div class="a" style="left:225px;top:235.66px;width:3px;height:1px;background:#bdc1c6"></div>
<div class="a" style="left:223.3px;top:245.59px;width:7px;height:1px;background:#9aa0a6"></div>
<div class="a" style="left:225px;top:255.51px;width:3px;height:1px;background:#bdc1c6"></div>
<div class="a" style="left:225px;top:265.43px;width:3px;height:1px;background:#bdc1c6"></div>
<div class="a" style="left:225px;top:275.35px;width:3px;height:1px;background:#bdc1c6"></div>
<div class="t" style="left:216.50px;top:280.77px;width:20px;height:10px;text-align:center;font-size:10px;color:#5f6368;transform:rotate(-90deg)">1</div>
<div class="a" style="left:225px;top:295.19px;width:3px;height:1px;background:#bdc1c6"></div>
<div class="a" style="left:225px;top:305.11px;width:3px;height:1px;background:#bdc1c6"></div>
<div class="a" style="left:225px;top:315.03px;width:3px;height:1px;background:#bdc1c6"></div>
<div class="a" style="left:223.3px;top:324.96px;width:7px;height:1px;background:#9aa0a6"></div>
<div class="a" style="left:225px;top:334.88px;width:3px;height:1px;background:#bdc1c6"></div>
<div class="a" style="left:225px;top:344.80px;width:3px;height:1px;background:#bdc1c6"></div>
<div class="a" style="left:225px;top:354.72px;width:3px;height:1px;background:#bdc1c6"></div>
<div class="t" style="left:216.50px;top:360.14px;width:20px;height:10px;text-align:center;font-size:10px;color:#5f6368;transform:rotate(-90deg)">2</div>
<div class="a" style="left:225px;top:374.56px;width:3px;height:1px;background:#bdc1c6"></div>
<div class="a" style="left:225px;top:384.48px;width:3px;height:1px;background:#bdc1c6"></div>
<div class="a" style="left:225px;top:394.40px;width:3px;height:1px;background:#bdc1c6"></div>
<div class="a" style="left:223.3px;top:404.33px;width:7px;height:1px;background:#9aa0a6"></div>
<div class="a" style="left:225px;top:414.25px;width:3px;height:1px;background:#bdc1c6"></div>
<div class="a" style="left:225px;top:424.17px;width:3px;height:1px;background:#bdc1c6"></div>
<div class="a" style="left:225px;top:434.09px;width:3px;height:1px;background:#bdc1c6"></div>
<div class="t" style="left:216.50px;top:439.51px;width:20px;height:10px;text-align:center;font-size:10px;color:#5f6368;transform:rotate(-90deg)">3</div>
<div class="a" style="left:225px;top:453.93px;width:3px;height:1px;background:#bdc1c6"></div>
<div class="a" style="left:225px;top:463.85px;width:3px;height:1px;background:#bdc1c6"></div>
<div class="a" style="left:225px;top:473.77px;width:3px;height:1px;background:#bdc1c6"></div>
<div class="a" style="left:223.3px;top:483.70px;width:7px;height:1px;background:#9aa0a6"></div>
<div class="a" style="left:225px;top:493.62px;width:3px;height:1px;background:#bdc1c6"></div>
<div class="a" style="left:225px;top:503.54px;width:3px;height:1px;background:#bdc1c6"></div>
<div class="a" style="left:225px;top:513.46px;width:3px;height:1px;background:#bdc1c6"></div>
<div class="t" style="left:216.50px;top:518.88px;width:20px;height:10px;text-align:center;font-size:10px;color:#5f6368;transform:rotate(-90deg)">4</div>
<div class="a" style="left:225px;top:533.30px;width:3px;height:1px;background:#bdc1c6"></div>
<div class="a" style="left:225px;top:543.22px;width:3px;height:1px;background:#bdc1c6"></div>
<div class="a" style="left:225px;top:553.14px;width:3px;height:1px;background:#bdc1c6"></div>
<div class="a" style="left:223.3px;top:563.07px;width:7px;height:1px;background:#9aa0a6"></div>
<div class="a" style="left:225px;top:572.99px;width:3px;height:1px;background:#bdc1c6"></div>
<div class="a" style="left:225px;top:582.91px;width:3px;height:1px;background:#bdc1c6"></div>
<div class="a" style="left:225px;top:592.83px;width:3px;height:1px;background:#bdc1c6"></div>
<div class="t" style="left:216.50px;top:598.25px;width:20px;height:10px;text-align:center;font-size:10px;color:#5f6368;transform:rotate(-90deg)">5</div>
<div class="a" style="left:225px;top:612.67px;width:3px;height:1px;background:#bdc1c6"></div>
<div class="a" style="left:225px;top:622.59px;width:3px;height:1px;background:#bdc1c6"></div>
<div class="a" style="left:225px;top:632.51px;width:3px;height:1px;background:#bdc1c6"></div>
<div class="a" style="left:223.3px;top:642.44px;width:7px;height:1px;background:#9aa0a6"></div>
<div class="a" style="left:460.5px;top:206.5px;width:793.4px;height:446px;background:#fff;box-shadow:0 0 0 1px #dcdcdc,1px 1px 3px rgba(0,0,0,.14)"></div>
<svg style="left:515.8px;top:277px" width="43.2" height="43" viewBox="0 0 43.2 43"><path d="M0 0H43.2V43A43.2 43 0 0 1 0 0z" fill="#e6e6e6"/><path d="M17 0H43.2V25A26.2 25 0 0 1 17 0z" fill="#cfcfcf"/></svg>
<div class="t" style="left:582.5px;top:272px;font-size:30px;font-weight:bold;color:#434343">Flag</div>
<div class="a" style="left:558.7px;top:303.7px;width:110.5px;height:14.7px;border:1.3px solid #d9d9d9;background:#fff"></div>
<div class="t" style="left:566px;top:313.3px;font-size:3.8px;color:#999">Click to add text</div>
<div class="a" style="left:795.6px;top:264px;width:355.1px;height:296.2px;background:#f5f5f5"></div>
<svg style="left:0;top:0" width="1536" height="864" viewBox="0 0 1536 864"><path d="M838.3 305L1137.8 304.5 856.9 433.8z" fill="#ed1c24"/><path d="M809.5 286.3L820.4 281 831.4 284.7 833.1 297.7 829.8 300.8 832.4 320 862.9 539.3 849.7 537.8 821.5 302 820.4 301.9 808.75 297.2z" fill="#000"/></svg>
<svg style="left:0;top:0" width="1536" height="864" viewBox="0 0 1536 864"><rect x="795.6" y="264" width="355.1" height="296.2" fill="none" stroke="#4d90fe" stroke-width="1.6"/><path d="M973.2 240V264" stroke="#4d90fe" stroke-width="1.4"/><circle cx="973.4" cy="240" r="3.3" fill="#1a73e8"/></svg>
<div class="a" style="left:792.10px;top:260.50px;width:7px;height:7px;background:#1a73e8"></div>
<div class="a" style="left:969.70px;top:260.50px;width:7px;height:7px;background:#1a73e8"></div>
<div class="a" style="left:1147.20px;top:260.50px;width:7px;height:7px;background:#1a73e8"></div>
<div class="a" style="left:792.10px;top:408.60px;width:7px;height:7px;background:#1a73e8"></div>
<div class="a" style="left:1147.20px;top:408.60px;width:7px;height:7px;background:#1a73e8"></div>
<div class="a" style="left:792.10px;top:556.70px;width:7px;height:7px;background:#1a73e8"></div>
<div class="a" style="left:969.70px;top:556.70px;width:7px;height:7px;background:#1a73e8"></div>
<div class="a" style="left:1147.20px;top:556.70px;width:7px;height:7px;background:#1a73e8"></div>
<!-- /CANVAS -->
<!-- BOTTOM -->
<div class="a" style="left:1480px;top:136px;width:1px;height:624px;background:#dadce0"></div>
<svg style="left:1499.7px;top:155px" width="18.6" height="18.6" viewBox="0 0 20 20"><path d="M2 0H15.8V4.2H4.2V15.8H0V2A2 2 0 0 1 2 0z" fill="#4285f4"/><path d="M15.8 0H18A2 2 0 0 1 20 2V4.2H15.8z" fill="#1967d2"/><rect x="15.8" y="4.2" width="4.2" height="11.6" fill="#fbbc04"/><path d="M4.2 15.8H15.8V20H4.2z" fill="#34a853"/><path d="M0 15.8H4.2V20H2A2 2 0 0 1 0 18z" fill="#188038"/><path d="M15.8 15.8H20L15.8 20z" fill="#ea4335"/><rect x="4.2" y="4.2" width="11.6" height="11.6" fill="#fff"/><text x="10" y="13.6" text-anchor="middle" font-family="Liberation Sans" font-size="8" fill="#4285f4">31</text></svg>
<svg style="left:1499.7px;top:210.6px" width="19" height="19" viewBox="0 0 19 19"><rect width="19" height="19" rx="2.2" fill="#fbbc04"/><circle cx="9.5" cy="8.2" r="3.6" fill="#fff"/><rect x="8" y="12" width="3" height="2.3" fill="#fff"/></svg>
<svg style="left:1500.5px;top:267.5px" width="18" height="17.5" viewBox="0 0 18 17.5"><path d="M14.6 6.5A7 7 0 1 1 11.8 3" fill="none" stroke="#1a73e8" stroke-width="2.6"/><path d="M13 2L17.5 1 16 5z" fill="#1a73e8"/><path d="M5 9l2.6 2.6L13 6.2" fill="none" stroke="#1a73e8" stroke-width="2.4"/></svg>
<svg style="left:1500px;top:323px" width="18.5" height="18.5" viewBox="0 0 18.5 18.5"><circle cx="9.25" cy="9.25" r="9.25" fill="#1a73e8"/><circle cx="9.25" cy="6.6" r="2.6" fill="#fff"/><path d="M4.5 13.2C4.5 11 7.5 10.3 9.25 10.3S14 11 14 13.2V13.8H4.5z" fill="#fff"/></svg>
<svg style="left:1503px;top:380px" width="12" height="17" viewBox="0 0 12 17"><path d="M6 0A6 6 0 0 1 12 6C12 10 8 12.5 6 17 4 12.5 0 10 0 6A6 6 0 0 1 6 0z" fill="#34a853"/><path d="M6 0A6 6 0 0 1 12 6L1.5 10A6 6 0 0 1 0 6 6 6 0 0 1 6 0z" fill="#fbbc04"/><path d="M1.8 1.8A6 6 0 0 1 6 0 6 6 0 0 1 10.6 2.2L4 8 0.6 4z" fill="#4285f4"/><path d="M1.8 1.8L4 4.6 0.8 7.6A6 6 0 0 1 1.8 1.8z" fill="#ea4335"/><circle cx="6" cy="6" r="2" fill="#fff"/></svg>
<div class="a" style="left:1498px;top:432px;width:20px;height:1px;background:#dadce0"></div>
<svg style="left:1503px;top:471px" width="12" height="12" viewBox="0 0 12 12"><path d="M6 0V12M0 6H12" stroke="#5f6368" stroke-width="1.5"/></svg>
<div class="a" style="left:220px;top:669px;width:1260px;height:1px;background:#e8eaed"></div>
<div class="a" style="left:220px;top:670px;width:1260px;height:8px;background:#fff"></div>
<div class="a" style="left:220px;top:678px;width:1260px;height:1px;background:#dadce0"></div>
<div class="a" style="left:840px;top:672px;width:4px;height:4px;border-radius:50%;background:#d5d7db"></div>
<div class="a" style="left:848px;top:672px;width:4px;height:4px;border-radius:50%;background:#d5d7db"></div>
<div class="a" style="left:856px;top:672px;width:4px;height:4px;border-radius:50%;background:#d5d7db"></div>
<div class="t" style="left:236px;top:691px;font-size:14.5px;color:#202124">Click to add speaker notes</div>
<div class="a" style="left:1363.5px;top:714px;width:100px;height:37.5px;border:1px solid #dadce0;border-radius:4px;background:#f8f9fa"></div>
<svg style="left:1377.5px;top:723.5px" width="18" height="20" viewBox="0 0 18 20"><path d="M2 0H16A2 2 0 0 1 18 2V16A2 2 0 0 1 16 18H10.5L9 19.8 7.5 18H2A2 2 0 0 1 0 16V2A2 2 0 0 1 2 0z" fill="#f9ab00"/><path d="M9 3.5C9.5 7 10.5 8 14 8.7 10.5 9.4 9.5 10.4 9 14 8.5 10.4 7.5 9.4 4 8.7 7.5 8 8.5 7 9 3.5z" fill="#fff"/></svg>
<div class="t" style="left:1406.5px;top:727px;font-size:12.5px;color:#5f6368">Explore</div>
<svg style="left:1505px;top:726px" width="8" height="12" viewBox="0 0 8 12"><path d="M1.2 1L6 6 1.2 11" stroke="#3c4043" stroke-width="1.6" fill="none"/></svg>
<div class="a" style="left:0;top:759px;width:1536px;height:1px;background:#dadce0"></div>
<div class="a" style="left:0;top:760px;width:1536px;height:56px;background:#fff"></div>
<svg style="left:22px;top:780px" width="12.5" height="15" viewBox="0 0 12.5 15"><path d="M0.5 0.5H8.5L12 4V14.5H0.5z" fill="#fff" stroke="#9aa0a6" stroke-width="1"/><rect x="3" y="6" width="6" height="5" fill="#1a73e8"/><path d="M3 11L5.5 8.5 9 11z" fill="#0b3d91"/></svg>
<div class="t" style="left:49px;top:782px;font-size:13px;color:#4d5156">flag.png</div>
<svg style="left:208px;top:785px" width="10" height="6" viewBox="0 0 10 6"><path d="M0.8 5.2L5 1 9.2 5.2" stroke="#5f6368" stroke-width="1.5" fill="none"/></svg>
<div class="a" style="left:236px;top:766px;width:1px;height:44px;background:#dadce0"></div>
<div class="a" style="left:1422.5px;top:771.5px;width:78px;height:31px;border:1px solid #dadce0;border-radius:4px;background:#fff"></div>
<div class="t" style="left:1439px;top:781px;font-size:12px;color:#1a73e8">Show all</div>
<svg style="left:1513px;top:783px" width="10" height="10" viewBox="0 0 10 10"><path d="M0.8 0.8L9.2 9.2M9.2 0.8L0.8 9.2" stroke="#3c4043" stroke-width="1.6"/></svg>
<!-- /BOTTOM -->
<!-- TASK -->
<div class="a" style="left:0;top:816px;width:1536px;height:48px;background:#dadada"></div>
<svg style="left:18.3px;top:828.8px" width="24" height="22" viewBox="0 0 24 22"><rect x="0" y="0" width="24" height="22" rx="1.5" fill="#0f6cbd"/><rect x="2.3" y="2.2" width="8.6" height="17.8" rx="0.8" fill="#f7f7f7"/><rect x="13.1" y="2.2" width="8.9" height="10" fill="#67d3f8"/><rect x="13.1" y="12.2" width="8.9" height="3.9" fill="#1fa0e6"/><rect x="13.1" y="16.1" width="8.9" height="3.9" fill="#0b7fd6"/></svg>
<svg style="left:515px;top:829px" width="23.4" height="23.2" viewBox="0 0 23.4 23.2"><defs><linearGradient id="wg" gradientUnits="userSpaceOnUse" x1="0" y1="0" x2="23.4" y2="23.2"><stop offset="0" stop-color="#3fd0f8"/><stop offset="1" stop-color="#0869d0"/></linearGradient></defs>
<rect x="0" y="0" width="11.2" height="11.1" rx="1" fill="url(#wg)"/><rect x="12.2" y="0" width="11.2" height="11.1" rx="1" fill="url(#wg)"/><rect x="0" y="12.1" width="11.2" height="11.1" rx="1" fill="url(#wg)"/><rect x="12.2" y="12.1" width="11.2" height="11.1" rx="1" fill="url(#wg)"/></svg>
<svg style="left:560px;top:828px" width="22" height="24" viewBox="0 0 22 24"><circle cx="12.4" cy="10" r="7.6" fill="none" stroke="#1c1c1c" stroke-width="2.2"/><path d="M7 15.5L2 21" stroke="#1c1c1c" stroke-width="2.6" stroke-linecap="round"/></svg>
<svg style="left:603px;top:828.5px" width="24" height="23" viewBox="0 0 24 23"><rect x="0.2" y="6.5" width="18" height="15.8" rx="1.2" fill="#1f1f1f"/><rect x="6" y="0.3" width="18" height="14.7" rx="1.2" fill="#f4f4f4" fill-opacity=".85"/><rect x="6" y="6.5" width="12.2" height="8.5" fill="#bdbdbd"/></svg>
<svg style="left:647px;top:828.5px" width="23.5" height="23" viewBox="0 0 23.5 23"><defs><linearGradient id="tg" x1="0" y1="0" x2="1" y2="1"><stop offset="0" stop-color="#8a6cc9"/><stop offset="1" stop-color="#5b5fc7"/></linearGradient></defs>
<path d="M11.75 0A11.2 11 0 1 1 5 19.8L0 22.8 1.5 17A11.2 11 0 0 1 11.75 0z" fill="url(#tg)"/><rect x="5" y="7" width="9" height="8.5" rx="1" fill="#fff"/><path d="M15 9.5L18.5 7.3V15.2L15 13z" fill="#fff"/></svg>
<svg style="left:691px;top:828px" width="24.5" height="24" viewBox="0 0 24 24"><defs><linearGradient id="eg1" x1="0" y1="0" x2="1" y2="1"><stop offset="0" stop-color="#35c1f1"/><stop offset=".6" stop-color="#34c28c"/><stop offset="1" stop-color="#66eb6e"/></linearGradient><linearGradient id="eg2" x1="0" y1="0" x2="0" y2="1"><stop offset="0" stop-color="#1e88e5"/><stop offset="1" stop-color="#0c59a4"/></linearGradient></defs>
<path d="M12 0C18.6 0 24 4.6 24 10.5 24 14.8 20.5 16.6 17.5 16.6 15 16.6 13 15.3 13.4 13.7 14.2 13 15 12 15 10.5 15 6.8 11 4.5 7.5 5.5 3.5 6.5 1 9.5 0.3 12.5 0.2 5.5 5.5 0 12 0z" fill="url(#eg1)"/>
<path d="M0.3 12.5C1 9 4 6 8 6 12 6 14 8.5 13.4 13.7 12.5 17 14 20 18 20.5 20 20.8 21.5 20.4 22 20.2 19.8 22.6 16 24 12 24 5.4 24 0.2 19 0.3 12.5z" fill="url(#eg2)"/></svg>
<svg style="left:735px;top:829px" width="24" height="22" viewBox="0 0 24 22"><path d="M0 2A2 2 0 0 1 2 0H8L10 2.5H22A2 2 0 0 1 24 4.5V8H0z" fill="#e4a818"/><path d="M0 4H24V20A2 2 0 0 1 22 22H2A2 2 0 0 1 0 20z" fill="#fcc84c"/><rect x="4.3" y="15.5" width="15.4" height="6.5" rx="1.2" fill="#1a7fd4"/><rect x="6.5" y="17.8" width="11" height="1" fill="#0f5fae"/></svg>
<svg style="left:779px;top:828.5px" width="23.5" height="23.5" viewBox="0 0 23.5 23.5"><path d="M6.5 3.5V1.2A1 1 0 0 1 7.5 0.2H16A1 1 0 0 1 17 1.2V3.5" fill="none" stroke="#3fb3f0" stroke-width="1.4"/><path d="M0 5A2 2 0 0 1 2 3H21.5A2 2 0 0 1 23.5 5V20.5A3 3 0 0 1 20.5 23.5H3A3 3 0 0 1 0 20.5z" fill="#1c4f8f"/>
<rect x="7.2" y="9" width="4" height="4" fill="#f25022"/><rect x="12.2" y="9" width="4" height="4" fill="#7fba00"/><rect x="7.2" y="14" width="4" height="4" fill="#00a4ef"/><rect x="12.2" y="14" width="4" height="4" fill="#ffb900"/></svg>
<svg style="left:823px;top:828.5px" width="24.5" height="22.5" viewBox="0 0 24.5 22.5"><path d="M0 7L12.25 0 24.5 7V22.5H0z" fill="#0f5fb0"/><path d="M2.5 7.5H22V16H2.5z" fill="#f0f0f0"/><path d="M0 7L12.25 14 24.5 7V22.5H0z" fill="#2b9ae8"/><path d="M0 22.5L12.25 13 24.5 22.5z" fill="#3aa8f0"/><path d="M0 7L12.25 14 24.5 7V8.5L12.25 15.5 0 8.5z" fill="#1c86d6" fill-opacity=".4"/></svg>
<svg style="left:867px;top:828px" width="24" height="24" viewBox="0 0 24 24"><rect width="24" height="24" fill="#29a9d8"/><path d="M6 5H9.5L8 18H18.5L18 20.5H4.5z" fill="#1a3e8c"/><path d="M7.5 3.5H11V17H18.5V19.5H7.5z" fill="#fff"/></svg>
<svg style="left:912px;top:828.3px" width="21.8" height="23.5" viewBox="0 0 21.8 23.5"><path d="M0 0L10.9 6 21.8 0V17.5L10.9 23.5 0 17.5z" fill="#c8202f"/><path d="M3.6 5.6L10.9 9.6 18.2 5.6V15.4L10.9 19.4 3.6 15.4z" fill="#dadada"/></svg>
<svg style="left:957.9px;top:828.3px" width="18.5" height="23.2" viewBox="0 0 18.5 23.2"><defs><linearGradient id="og" x1="0" y1="0" x2="0" y2="1"><stop offset="0" stop-color="#ff8f00"/><stop offset="1" stop-color="#d83b01"/></linearGradient></defs>
<path d="M11 0L18.5 2.5V20.5L11 23.2 0 19.5 11 20.5V4L3.5 6V17.5L0 19.5V4.5z" fill="#c8202f"/><path d="M11 0L18.5 2.5V20.5L11 23.2z" fill="url(#og)"/></svg>
<div class="a" style="left:992px;top:821px;width:38px;height:38.5px;border-radius:4px;background:#ebebeb"></div>
<svg style="left:997.6px;top:826.3px" width="26.8" height="26.8" viewBox="0 0 48 48"><path d="M24 4A20 20 0 0 1 41.3 14H24A10 10 0 0 0 15.3 19L6.7 14A20 20 0 0 1 24 4z" fill="#db4437"/><path d="M6.7 14L15.3 29A10 10 0 0 0 24 34L15.4 43A20 20 0 0 1 6.7 14z" fill="#0f9d58"/><path d="M41.3 14A20 20 0 0 1 24 44L32.7 29A10 10 0 0 0 24 14z" fill="#ffcd40"/><path d="M15.3 29A10 10 0 0 0 24 34L15.4 43A20 20 0 0 1 6.7 14z" fill="#0f9d58"/><circle cx="24" cy="24" r="9.5" fill="#fff"/><circle cx="24" cy="24" r="7.5" fill="#4285f4"/></svg>
<div class="a" style="left:1003px;top:856px;width:16px;height:3px;border-radius:1.5px;background:#0067c0"></div>
<svg style="left:1233px;top:836px" width="14" height="8" viewBox="0 0 14 8"><path d="M0.7 7.3L7 1 13.3 7.3" stroke="#1c1c1c" stroke-width="1.2" fill="none"/></svg>
<svg style="left:1255px;top:834px" width="18" height="11" viewBox="0 0 18 11"><path d="M4 10.5A3.5 3.5 0 0 1 3.5 3.6 5.2 5 0 0 1 13 3.2 3.8 3.7 0 0 1 14 10.5z" fill="#ebebeb" stroke="#3a3a3a" stroke-width="1"/></svg>
<svg style="left:1279.5px;top:832.5px" width="17" height="16" viewBox="0 0 17 16"><path d="M4.5 0L8.5 2.5 4.5 5 0.5 2.5zM12.5 0L16.5 2.5 12.5 5 8.5 2.5zM4.5 5L8.5 7.5 4.5 10 0.5 7.5zM12.5 5L16.5 7.5 12.5 10 8.5 7.5zM8.5 8.5L12.5 11 8.5 13.5 4.5 11z" fill="#1c1c1c"/><rect x="0" y="7" width="9" height="8.5" rx="1" fill="#e81123"/><text x="4.5" y="14" text-anchor="middle" font-family="Liberation Sans" font-weight="bold" font-size="7.5" fill="#fff">5</text></svg>
<div class="t" style="left:1311px;top:827px;font-size:12px;letter-spacing:-0.9px;color:#1c1c1c">ENG</div>
<div class="t" style="left:1316.5px;top:843.5px;font-size:12px;letter-spacing:-0.5px;color:#1c1c1c">IN</div>
<svg style="left:1351.5px;top:834px" width="17" height="11.5" viewBox="0 0 17 11.5"><path d="M0.7 4.2A11 11 0 0 1 16.3 4.2M3 6.5A7.6 7.6 0 0 1 14 6.5M5.3 8.7A4.3 4.3 0 0 1 11.7 8.7" stroke="#1c1c1c" stroke-width="1.1" fill="none"/><circle cx="8.5" cy="10.5" r="1" fill="#1c1c1c"/></svg>
<svg style="left:1376px;top:834px" width="17" height="12" viewBox="0 0 17 12"><path d="M0.6 4H3.5L7.5 0.8V11.2L3.5 8H0.6z" stroke="#1c1c1c" stroke-width="1.1" fill="none" stroke-linejoin="round"/><path d="M10 3.5A3.5 3.5 0 0 1 10 8.5M12.3 1.8A6 6 0 0 1 12.3 10.2M14.5 0.5A8.5 8.5 0 0 1 14.5 11.5" stroke="#1c1c1c" stroke-width="1.1" fill="none"/></svg>
<svg style="left:1400px;top:835.5px" width="17" height="10" viewBox="0 0 17 10"><rect x="0.6" y="0.6" width="13.8" height="8.8" rx="1.5" stroke="#1c1c1c" stroke-width="1.1" fill="none"/><rect x="2.3" y="2.3" width="4.5" height="5.4" fill="#1c1c1c"/><rect x="15" y="3.3" width="1.8" height="3.4" fill="#1c1c1c"/></svg>
<div class="t" style="left:1466.5px;top:826.5px;font-size:12px;letter-spacing:-0.7px;color:#1c1c1c">21:40</div>
<div class="t" style="left:1431.5px;top:842.5px;font-size:12px;color:#1c1c1c">07-04-2022</div>
<div class="a" style="left:1501px;top:832.5px;width:16px;height:16px;border-radius:50%;background:#0078d4"></div>
<div class="t" style="left:1501px;top:835px;width:16px;text-align:center;font-size:11px;color:#fff">3</div>
<!-- /TASK -->
</body></html>
